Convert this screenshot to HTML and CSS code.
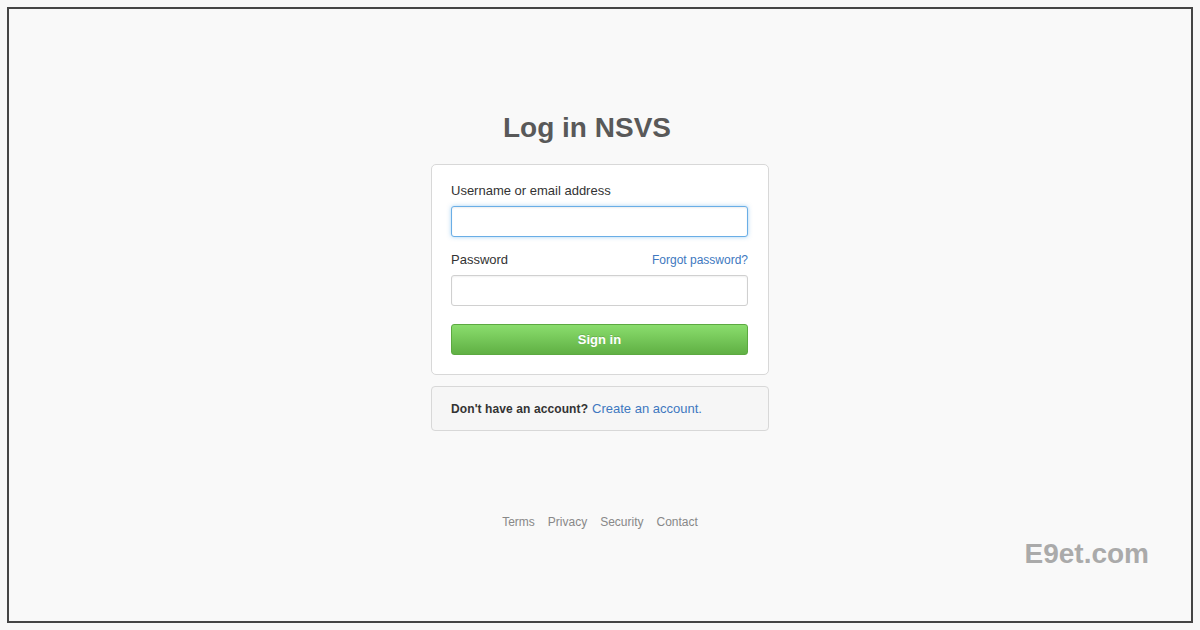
FILE: index.html
```html
<!DOCTYPE html>
<html lang="en">
<head>
  <meta charset="UTF-8">
  <meta name="viewport" content="width=device-width, initial-scale=1.0">
  <title>Log in NSVS</title>
  <link rel="stylesheet" href="styles.css">
</head>
<body>

  <div class="frame">
    <h1 class="title">Log in NSVS</h1>

    <!-- Formulario de acceso -->
    <form class="login-box">
      <label for="login">Username or email address</label>
      <input type="text" id="login" class="field focus">

      <div class="label-row">
        <label for="password">Password</label>
        <a href="#" class="link small">Forgot password?</a>
      </div>
      <input type="password" id="password" class="field">

      <input type="submit" value="Sign in" class="btn-signin">
    </form>

    <div class="signup-box">
      <strong>Don't have an account?</strong>
      <a href="#" class="link">Create an account</a>.
    </div>

    <div class="footer">
      <a href="#">Terms</a>
      <a href="#">Privacy</a>
      <a href="#">Security</a>
      <a href="#">Contact</a>
    </div>

    <div class="watermark">E9et.com</div>
  </div>

</body>
</html>
```

FILE: styles.css
```css
body, html {
  margin: 0;
  padding: 0;
  height: 100%;
  font-family: "Liberation Sans", Arial, sans-serif;
  background: #f9f9f9;
}

.frame {
  position: relative;
  margin: 7px;
  height: 616px;
  border: 2px solid #464646;
  background: #f9f9f9;
  display: flex;
  flex-direction: column;
  align-items: center;
  padding-top: 104px;
  box-sizing: border-box;
}

.title {
  margin: 0 26px 21px 0;
  font-size: 28px;
  line-height: 30px;
  color: #595959;
  font-weight: bold;
}

.login-box {
  width: 338px;
  box-sizing: border-box;
  padding: 17px 20px 19px 19px;
  background: #fff;
  border: 1px solid #d8d8d8;
  border-radius: 5px;
  display: flex;
  flex-direction: column;
}

.login-box label {
  font-size: 13px;
  line-height: 18px;
  color: #333;
}

.label-row {
  display: flex;
  justify-content: space-between;
  align-items: baseline;
  margin-top: 14px;
}

.field {
  margin-top: 6px;
  height: 31px;
  box-sizing: border-box;
  border: 1px solid #d0d0d0;
  border-radius: 3px;
  background: #fff;
  box-shadow: inset 0 1px 2px rgba(0, 0, 0, 0.06);
  font-size: 13px;
  padding: 6px 8px;
}

.label-row + .field {
  margin-top: 6px;
}

.field.focus {
  border-color: #6aaee6;
  box-shadow: inset 0 1px 2px rgba(0, 0, 0, 0.07), 0 0 4px rgba(81, 167, 232, 0.5);
}

.btn-signin {
  margin-top: 18px;
  height: 31px;
  border: 1px solid #5ca941;
  border-radius: 3px;
  background: linear-gradient(#8add6d, #60b044);
  color: #fff;
  font-family: "Liberation Sans", Arial, sans-serif;
  font-size: 13px;
  font-weight: bold;
  text-shadow: 0 -1px 0 rgba(0, 0, 0, 0.15);
  cursor: pointer;
}

.link {
  color: #4078c0;
  text-decoration: none;
  font-size: 13px;
}

.link.small {
  font-size: 12px;
}

.signup-box {
  margin-top: 11px;
  width: 338px;
  height: 45px;
  box-sizing: border-box;
  padding: 0 19px;
  background: #f6f6f6;
  border: 1px solid #d8d8d8;
  border-radius: 4px;
  display: flex;
  align-items: center;
  font-size: 13px;
  color: #4078c0;
}

.signup-box strong {
  color: #333;
  font-size: 12px;
  margin-right: 4px;
  letter-spacing: 0.1px;
}

.footer {
  margin-top: 83px;
  display: flex;
  gap: 13px;
  font-size: 12px;
  line-height: 16px;
}

.footer a {
  color: #888;
  text-decoration: none;
}

.watermark {
  position: absolute;
  right: 42px;
  top: 529px;
  font-size: 28px;
  line-height: 32px;
  font-weight: bold;
  color: #aaa;
}
```
